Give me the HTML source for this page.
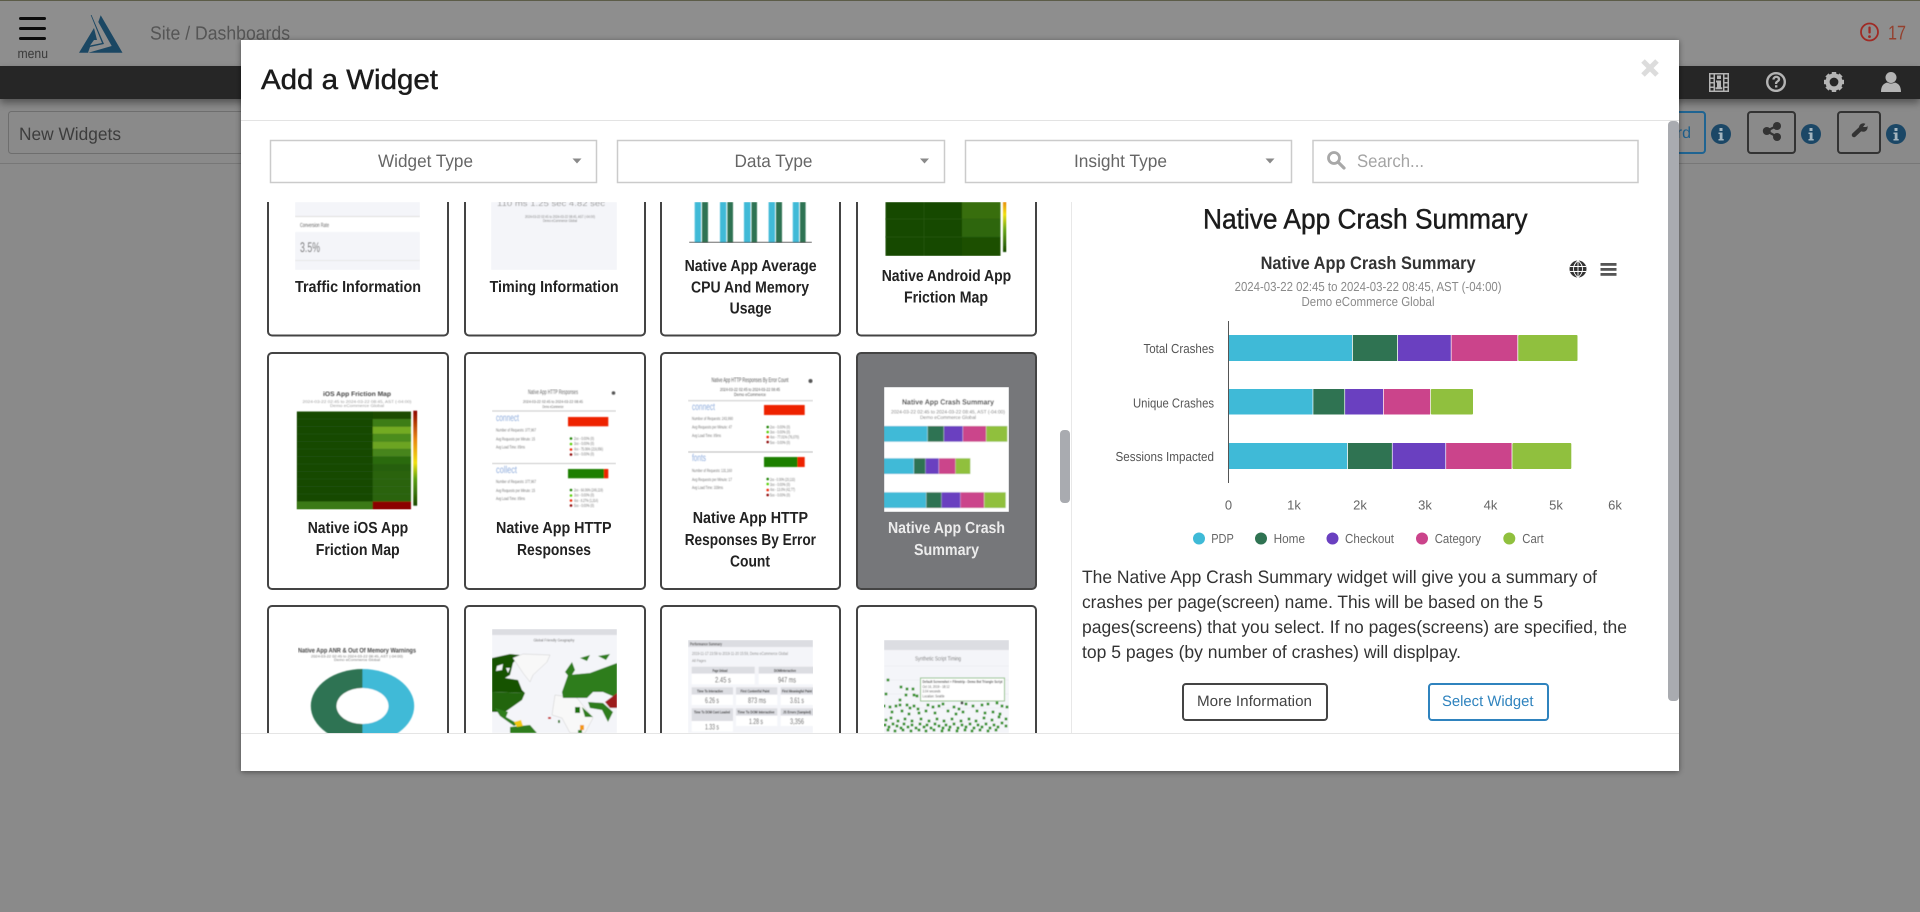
<!DOCTYPE html>
<html lang="en"><head><meta charset="utf-8"><title>Add a Widget</title>
<style>
html,body{margin:0;padding:0;width:1920px;height:912px;overflow:hidden;background:#8a8a8a}
svg{display:block;font-family:"Liberation Sans",sans-serif}
.m{stroke-width:.45}
</style></head><body>
<svg xmlns="http://www.w3.org/2000/svg" width="1920" height="912" viewBox="0 0 1920 912" text-rendering="geometricPrecision">
<defs>
<filter id="sh" x="-5%" y="-5%" width="110%" height="110%"><feDropShadow dx="0" dy="1" stdDeviation="3" flood-color="#000" flood-opacity=".45"/></filter>
<filter id="bs" x="-5%" y="-50%" width="110%" height="250%"><feDropShadow dx="0" dy="4" stdDeviation="4" flood-color="#000" flood-opacity=".4"/></filter>
<filter id="b" x="0" y="0" width="100%" height="100%"><feGaussianBlur stdDeviation=".4"/></filter>
<clipPath id="list"><rect x="250" y="202" width="821" height="531"/></clipPath>
<clipPath id="c1"><rect x="492" y="629" width="125" height="104"/></clipPath>
<clipPath id="c2"><rect x="688" y="640" width="125" height="93"/></clipPath>
<clipPath id="c3"><rect x="884" y="640" width="125" height="93"/></clipPath>
<clipPath id="c4"><rect x="295" y="640" width="135" height="93"/></clipPath>
</defs>

<!-- Page header -->
<rect width="1920" height="66" fill="#8e8e8e"/>
<rect width="1920" height="1" fill="#5c5c48"/>
<g fill="#0d0d0d"><rect x="19" y="17" width="27" height="3" rx="1.5"/><rect x="19" y="27" width="27" height="3" rx="1.5"/><rect x="19" y="37" width="27" height="3" rx="1.5"/></g>
<text x="17.5" y="58" font-size="13.5" fill="#3a3a3a" textLength="30.5" lengthAdjust="spacingAndGlyphs">menu</text>
<g fill="#1b4763">
<polygon points="100.7,15.3 122.5,52.7 88.3,52.7 111.7,46 98.3,22"/>
<polygon points="90.7,15 102,43 90,45.5 94,40 97,40 94,28 79,52.7 88,52.7 90,47 104,44 91.5,15"/>
</g>
<text x="150" y="39.5" font-size="19" fill="#555" textLength="140" lengthAdjust="spacingAndGlyphs">Site / Dashboards</text>
<circle cx="1869.5" cy="32" r="8.5" fill="none" stroke="#a02a24" stroke-width="1.8"/>
<rect x="1868.4" y="26.5" width="2.3" height="7" rx="1" fill="#a02a24"/><circle cx="1869.5" cy="36.6" r="1.4" fill="#a02a24"/>
<text x="1888" y="39.7" font-size="20" fill="#94402e" textLength="18" lengthAdjust="spacingAndGlyphs">17</text>

<rect y="66" width="1920" height="33" fill="#272727" filter="url(#bs)"/>
<!-- Dark bar icons -->
<g fill="#b4b4b4">
<path fill-rule="evenodd" d="M1709 73h20v19h-20zM1710.500 74.500v3h3v-3zM1710.500 79v3h3v-3zM1710.500 83.500v3h3v-3zM1710.500 88v2.500h3V88zM1724.500 74.500v3h3v-3zM1724.500 79v3h3v-3zM1724.500 83.500v3h3v-3zM1724.500 88v2.500h3V88zM1715 74.500v16h8v-16z"/>
<rect x="1717" y="75.500" width="4" height="3.500"/><path d="M1716 80.500h5v6.800h1.300v2h-6.800v-2h1.500v-4.800H1716z"/>
<circle cx="1776" cy="82" r="8.800" fill="none" stroke="#b4b4b4" stroke-width="2.400"/>
<path d="M1772.300 79.500c.3-2.400 2-3.700 4-3.700 2.300 0 3.900 1.400 3.900 3.300 0 1.600-.9 2.400-2 3.100-.8.500-1 .9-1 1.800h-2.300c0-1.700.4-2.500 1.700-3.300.8-.5 1.200-.9 1.200-1.500 0-.8-.6-1.300-1.500-1.300s-1.500.6-1.700 1.700zM1775 85.200h2.400v2.300H1775z"/>
<g transform="translate(1834,82)"><circle r="6.500" fill="none" stroke="#b4b4b4" stroke-width="4.200"/><rect x="-2.200" y="-10" width="4.400" height="4"/><rect x="-2.200" y="-10" width="4.400" height="4" transform="rotate(45)"/><rect x="-2.200" y="-10" width="4.400" height="4" transform="rotate(90)"/><rect x="-2.200" y="-10" width="4.400" height="4" transform="rotate(135)"/><rect x="-2.200" y="-10" width="4.400" height="4" transform="rotate(180)"/><rect x="-2.200" y="-10" width="4.400" height="4" transform="rotate(225)"/><rect x="-2.200" y="-10" width="4.400" height="4" transform="rotate(270)"/><rect x="-2.200" y="-10" width="4.400" height="4" transform="rotate(315)"/></g>
<circle cx="1891" cy="77.500" r="5.500"/><path d="M1881 92c0-6 2.500-8.500 6-9.500 2.500 1.300 5.500 1.300 8 0 3.500 1 6 3.500 6 9.500z"/>
</g>

<!-- Toolbar -->
<rect x="8.500" y="111.500" width="400" height="42" rx="3" fill="none" stroke="#6e6e6e"/>
<text x="19" y="140" font-size="18" fill="#3d3d3d" textLength="102" lengthAdjust="spacingAndGlyphs">New Widgets</text>
<rect y="163" width="1920" height="1" fill="#777"/>
<rect x="1600" y="112" width="105" height="41" rx="3" fill="none" stroke="#1f6492" stroke-width="2"/>
<text x="1691" y="138" font-size="16" fill="#1f5f8b" text-anchor="end">Add Dashboard</text>
<rect x="1748" y="112" width="47" height="41" rx="3" fill="none" stroke="#333" stroke-width="2"/>
<rect x="1838" y="112" width="42" height="41" rx="3" fill="none" stroke="#333" stroke-width="2"/>
<g fill="#333"><circle cx="1777" cy="126" r="4"/><circle cx="1766.800" cy="131" r="4"/><circle cx="1777" cy="137" r="4"/><path d="M1766 130l11-5.500 1 2-11 5.500zM1767 130l11 6-1 2-11-6z"/></g>
<g><path d="M1854 135l8-7.500" stroke="#333" stroke-width="4.500" stroke-linecap="round"/><circle cx="1863.300" cy="127.500" r="4.300" fill="#333"/><path d="M1863 127l3-4h3l-2.500 4z" fill="#8a8a8a"/></g>
<g fill="#1b4766"><circle cx="1721" cy="134" r="10"/><circle cx="1811" cy="134" r="10"/><circle cx="1896" cy="134" r="10"/></g>
<g fill="#a5b5bf"><path d="M1719.500 128h3v3h-3zM1718.500 132.500h4v6.500h1.200v1.500h-5.200V139h1.200v-5h-1.200z"/><path d="M1809.500 128h3v3h-3zM1808.500 132.500h4v6.500h1.200v1.500h-5.200V139h1.200v-5h-1.200z"/><path d="M1894.500 128h3v3h-3zM1893.500 132.500h4v6.500h1.200v1.500h-5.200V139h1.200v-5h-1.200z"/></g>

<!-- Modal -->
<rect x="241" y="40" width="1438" height="731" fill="#fff" filter="url(#sh)"/>
<text x="261" y="89" font-size="28" fill="#1b1b1b" stroke="#1b1b1b" class="m" textLength="177" lengthAdjust="spacingAndGlyphs">Add a Widget</text>
<path d="M1643 61l14 14M1657 61l-14 14" stroke="#dcdcdc" stroke-width="5"/>
<rect x="241" y="120" width="1438" height="1" fill="#e3e3e3"/>

<!-- Filters -->
<g fill="#fff" stroke="#cbcbcb" stroke-width="1.500">
<rect x="270.500" y="140.500" width="326" height="42"/><rect x="617.500" y="140.500" width="327" height="42"/><rect x="965.500" y="140.500" width="326" height="42"/><rect x="1313" y="140.500" width="325" height="42"/>
</g>
<g font-size="18" fill="#666">
<text x="378" y="167" textLength="95" lengthAdjust="spacingAndGlyphs">Widget Type</text>
<text x="734.500" y="167" textLength="78" lengthAdjust="spacingAndGlyphs">Data Type</text>
<text x="1074" y="167" textLength="93" lengthAdjust="spacingAndGlyphs">Insight Type</text>
<text x="1357" y="167" fill="#a4a4a4" textLength="67" lengthAdjust="spacingAndGlyphs">Search...</text>
</g>
<g fill="#8a8a8a"><polygon points="572.500,158.500 581.500,158.500 577,163.500"/><polygon points="920,158.500 929,158.500 924.500,163.500"/><polygon points="1265.500,158.500 1274.500,158.500 1270,163.500"/></g>
<circle cx="1334" cy="158" r="5.500" fill="none" stroke="#a8a8a8" stroke-width="2.800"/><path d="M1338 162l6 6" stroke="#a8a8a8" stroke-width="3.200" stroke-linecap="round"/>

<!-- Widget list -->
<g clip-path="url(#list)">
<g fill="#fff" stroke="#444" stroke-width="2">
<rect x="268" y="100" width="180" height="235.500" rx="4"/><rect x="465" y="100" width="180" height="235.500" rx="4"/><rect x="661" y="100" width="179" height="235.500" rx="4"/><rect x="857" y="100" width="179" height="235.500" rx="4"/>
<rect x="268" y="353" width="180" height="236" rx="4"/><rect x="465" y="353" width="180" height="236" rx="4"/><rect x="661" y="353" width="179" height="236" rx="4"/><rect x="857" y="353" width="179" height="236" rx="4" fill="#76777a"/>
<rect x="268" y="606" width="180" height="236" rx="4"/><rect x="465" y="606" width="180" height="236" rx="4"/><rect x="661" y="606" width="179" height="236" rx="4"/><rect x="857" y="606" width="179" height="236" rx="4"/>
</g>

<!-- Traffic -->
<g filter="url(#b)">
<rect x="295" y="202" width="125" height="68" fill="#f4f5f9"/>
<rect x="295" y="216" width="125" height="1" fill="#ddd"/><rect x="295" y="217" width="125" height="15" fill="#fff"/><rect x="295" y="260" width="125" height="1" fill="#e6e6e6"/>
<text x="300" y="227" font-size="6" fill="#444" textLength="29" lengthAdjust="spacingAndGlyphs">Conversion Rate</text>
<text x="300" y="252" font-size="14" fill="#666" textLength="20" lengthAdjust="spacingAndGlyphs">3.5%</text>
</g>
<!-- Timing -->
<g filter="url(#b)">
<rect x="491" y="202" width="126" height="68" fill="#f4f5f9"/>
<text x="497" y="206" font-size="8" fill="#999" textLength="108" lengthAdjust="spacingAndGlyphs">110 ms   1.25 sec   4.82 sec</text>
<text x="525" y="218" font-size="4" fill="#777" textLength="70" lengthAdjust="spacingAndGlyphs">2024-03-22 02:45 to 2024-03-22 08:45, AST (-04:00)</text>
<text x="543" y="222" font-size="4" fill="#777" textLength="34" lengthAdjust="spacingAndGlyphs">Demo eCommerce Global</text>
</g>
<!-- CPU -->
<g filter="url(#b)">
<g fill="#3fbad7"><rect x="694.700" y="202" width="6.300" height="40"/><rect x="720" y="202" width="6.300" height="40"/><rect x="744" y="202" width="6.500" height="40"/><rect x="768.600" y="202" width="6.400" height="40"/><rect x="792.800" y="202" width="6.200" height="40"/></g>
<g fill="#2f7352"><rect x="702" y="202" width="6" height="40"/><rect x="727.400" y="202" width="5.600" height="40"/><rect x="751.500" y="202" width="5.500" height="40"/><rect x="776" y="202" width="6" height="40"/><rect x="800" y="202" width="5.600" height="40"/></g>
<rect x="689" y="242" width="123" height="1" fill="#444"/>
</g>
<!-- Android -->
<g filter="url(#b)">
<rect x="885.500" y="202" width="115" height="54" fill="#174a00"/>
<rect x="962" y="202" width="38.500" height="17" fill="#376e0c"/><rect x="962" y="219" width="38.500" height="18" fill="#2e660a"/><rect x="962" y="237" width="38.500" height="19" fill="#1c4f00"/>
<path d="M924 202v54M885 219h115M885 237h115" stroke="#2b5a12" stroke-width=".6"/>
<linearGradient id="g1" x1="0" y1="0" x2="0" y2="1"><stop offset="0" stop-color="#e89010"/><stop offset=".25" stop-color="#f0e010"/><stop offset=".55" stop-color="#6aa818"/><stop offset="1" stop-color="#174a00"/></linearGradient>
<rect x="1003" y="202" width="3.500" height="50" fill="url(#g1)"/>
</g>

<!-- iOS friction -->
<g filter="url(#b)">
<text x="357" y="396" font-size="6.500" font-weight="700" fill="#444" text-anchor="middle" textLength="68" lengthAdjust="spacingAndGlyphs">iOS App Friction Map</text>
<text x="357" y="403" font-size="4" fill="#999" text-anchor="middle" textLength="109" lengthAdjust="spacingAndGlyphs">2024-03-22 02:45 to 2024-03-22 08:45, AST (-04:00)</text>
<text x="357" y="407" font-size="4" fill="#999" text-anchor="middle" textLength="54" lengthAdjust="spacingAndGlyphs">Demo eCommerce Global</text>
<rect x="296.700" y="411.500" width="114.300" height="98" fill="#174800"/>
<g>
<rect x="372.700" y="411.500" width="38.300" height="7.500" fill="#1a4b00"/><rect x="372.700" y="419" width="38.300" height="7.500" fill="#3d7d17"/><rect x="372.700" y="426.500" width="38.300" height="7.500" fill="#73ab22"/><rect x="372.700" y="434" width="38.300" height="7.500" fill="#4c8c1c"/><rect x="372.700" y="441.500" width="38.300" height="7.500" fill="#6ca420"/><rect x="372.700" y="449" width="38.300" height="7.500" fill="#46851a"/><rect x="372.700" y="456.500" width="38.300" height="7.500" fill="#2c6a10"/><rect x="372.700" y="464" width="38.300" height="7.500" fill="#265f0c"/><rect x="372.700" y="471.500" width="38.300" height="30" fill="#2a640f"/>
<rect x="296.700" y="501.500" width="76" height="8" fill="#3a7a14"/><rect x="372.700" y="501.500" width="38.300" height="8" fill="#8c0000"/>
</g>
<path d="M296.700 419h114M296.700 426.500h114M296.700 434h114M296.700 441.500h114M296.700 449h114M296.700 456.500h114M296.700 464h114M296.700 471.500h114M296.700 479h114M296.700 486.500h114M296.700 494h114" stroke="#3a6a20" stroke-width=".25"/>
<linearGradient id="g2" x1="0" y1="0" x2="0" y2="1"><stop offset="0" stop-color="#8b0000"/><stop offset=".3" stop-color="#e8850c"/><stop offset=".55" stop-color="#f0e010"/><stop offset=".72" stop-color="#5aa010"/><stop offset="1" stop-color="#174800"/></linearGradient>
<rect x="413.300" y="410.700" width="4" height="95" fill="url(#g2)"/>
</g>

<!-- HTTP responses -->
<g filter="url(#b)">
<text x="553" y="394" font-size="6.500" fill="#666" text-anchor="middle" textLength="50" lengthAdjust="spacingAndGlyphs">Native App HTTP Responses</text>
<circle cx="613.500" cy="393" r="1.800" fill="#555"/>
<text x="553" y="403" font-size="4" fill="#666" text-anchor="middle" textLength="60" lengthAdjust="spacingAndGlyphs">2024-03-22 02:45 to 2024-03-22 08:45</text>
<text x="553" y="408" font-size="4" fill="#666" text-anchor="middle" textLength="21" lengthAdjust="spacingAndGlyphs">Demo eCommerce</text>
<rect x="492" y="410.500" width="124" height="1" fill="#c8c8c8"/>
<text x="496" y="421" font-size="10" fill="#8caadb" textLength="23" lengthAdjust="spacingAndGlyphs">connect</text>
<rect x="568" y="417" width="40.300" height="9.300" fill="#ee2200"/>
<g font-size="4.500" fill="#777"><text x="496" y="431.500" textLength="40" lengthAdjust="spacingAndGlyphs">Number of Requests: 377,967</text><text x="496" y="440.500" textLength="39" lengthAdjust="spacingAndGlyphs">Avg Requests per Minute: 15</text><text x="496" y="448.500" textLength="29" lengthAdjust="spacingAndGlyphs">Avg Load Time: 85ms</text>
<text x="574" y="440" textLength="20" lengthAdjust="spacingAndGlyphs">2xx - 0.00% (0)</text><text x="574" y="445" textLength="20" lengthAdjust="spacingAndGlyphs">3xx - 0.00% (0)</text><text x="574" y="450.500" textLength="29" lengthAdjust="spacingAndGlyphs">4xx - 75.06% (219,056)</text><text x="574" y="455.500" textLength="20" lengthAdjust="spacingAndGlyphs">5xx - 0.00% (0)</text></g>
<g><circle cx="571" cy="438.500" r="1.300" fill="#1a8000"/><circle cx="571" cy="444" r="1.300" fill="#55cc00"/><circle cx="571" cy="449.500" r="1.300" fill="#ee2200"/><circle cx="571" cy="454.500" r="1.300" fill="#8b0000"/></g>
<rect x="492" y="463" width="124" height="1" fill="#c8c8c8"/>
<text x="496" y="473" font-size="10" fill="#8caadb" textLength="21" lengthAdjust="spacingAndGlyphs">collect</text>
<rect x="568" y="469" width="36" height="9.300" fill="#1f7f00"/><rect x="604" y="469" width="4.300" height="9.300" fill="#ee2200"/>
<g font-size="4.500" fill="#777"><text x="496" y="483" textLength="40" lengthAdjust="spacingAndGlyphs">Number of Requests: 377,967</text><text x="496" y="492" textLength="39" lengthAdjust="spacingAndGlyphs">Avg Requests per Minute: 15</text><text x="496" y="500" textLength="29" lengthAdjust="spacingAndGlyphs">Avg Load Time: 85ms</text>
<text x="574" y="491.500" textLength="29" lengthAdjust="spacingAndGlyphs">2xx - 64.06% (246,119)</text><text x="574" y="496.500" textLength="20" lengthAdjust="spacingAndGlyphs">3xx - 0.00% (0)</text><text x="574" y="502" textLength="24" lengthAdjust="spacingAndGlyphs">4xx - 8.27% (1,314)</text><text x="574" y="507" textLength="20" lengthAdjust="spacingAndGlyphs">5xx - 0.00% (0)</text></g>
<g><circle cx="571" cy="490" r="1.300" fill="#1a8000"/><circle cx="571" cy="495.500" r="1.300" fill="#55cc00"/><circle cx="571" cy="500.500" r="1.300" fill="#ee2200"/><circle cx="571" cy="505.500" r="1.300" fill="#8b0000"/></g>
</g>

<!-- HTTP by error count -->
<g filter="url(#b)">
<text x="750" y="382" font-size="6.500" fill="#555" text-anchor="middle" textLength="77" lengthAdjust="spacingAndGlyphs">Native App HTTP Responses By Error Count</text>
<circle cx="810.500" cy="381" r="2" fill="#555"/>
<text x="750" y="391" font-size="4.500" fill="#555" text-anchor="middle" textLength="60" lengthAdjust="spacingAndGlyphs">2024-03-22 02:45 to 2024-03-22 08:45</text>
<text x="750" y="396" font-size="4.500" fill="#555" text-anchor="middle" textLength="32" lengthAdjust="spacingAndGlyphs">Demo eCommerce</text>
<rect x="688" y="400.200" width="125" height="1" fill="#c8c8c8"/>
<text x="692" y="410" font-size="10" fill="#8caadb" textLength="23" lengthAdjust="spacingAndGlyphs">connect</text>
<rect x="764" y="405" width="40.700" height="10" fill="#ee2200"/>
<g font-size="4.500" fill="#777"><text x="692" y="420" textLength="41" lengthAdjust="spacingAndGlyphs">Number of Requests: 243,990</text><text x="692" y="428.500" textLength="40" lengthAdjust="spacingAndGlyphs">Avg Requests per Minute: 47</text><text x="692" y="437" textLength="29" lengthAdjust="spacingAndGlyphs">Avg Load Time: 85ms</text>
<text x="770" y="428.500" textLength="20" lengthAdjust="spacingAndGlyphs">2xx - 0.00% (0)</text><text x="770" y="433.500" textLength="20" lengthAdjust="spacingAndGlyphs">3xx - 0.00% (0)</text><text x="770" y="438.500" textLength="29" lengthAdjust="spacingAndGlyphs">4xx - 77.01% (76,070)</text><text x="770" y="444" textLength="20" lengthAdjust="spacingAndGlyphs">5xx - 0.00% (0)</text></g>
<g><circle cx="767.700" cy="427" r="1.300" fill="#1a8000"/><circle cx="767.700" cy="432" r="1.300" fill="#55cc00"/><circle cx="767.700" cy="437" r="1.300" fill="#ee2200"/><circle cx="767.700" cy="442" r="1.300" fill="#8b0000"/></g>
<rect x="688" y="451.500" width="125" height="1" fill="#b8b8b8"/>
<text x="692" y="461" font-size="10" fill="#8caadb" textLength="14" lengthAdjust="spacingAndGlyphs">fonts</text>
<rect x="764" y="457" width="33.500" height="10" fill="#1f7f00"/><rect x="797.500" y="457" width="7.200" height="10" fill="#ee2200"/>
<g font-size="4.500" fill="#777"><text x="692" y="472" textLength="40" lengthAdjust="spacingAndGlyphs">Number of Requests: 131,160</text><text x="692" y="481" textLength="40" lengthAdjust="spacingAndGlyphs">Avg Requests per Minute: 17</text><text x="692" y="489" textLength="31" lengthAdjust="spacingAndGlyphs">Avg Load Time: 339ms</text>
<text x="770" y="481" textLength="25" lengthAdjust="spacingAndGlyphs">2xx - 0.00% (20,133)</text><text x="770" y="486" textLength="20" lengthAdjust="spacingAndGlyphs">3xx - 0.00% (0)</text><text x="770" y="491" textLength="25" lengthAdjust="spacingAndGlyphs">4xx - 13.0% (42,77)</text><text x="770" y="496.500" textLength="20" lengthAdjust="spacingAndGlyphs">5xx - 0.00% (0)</text></g>
<g><circle cx="767.700" cy="479" r="1.300" fill="#1a8000"/><circle cx="767.700" cy="484" r="1.300" fill="#55cc00"/><circle cx="767.700" cy="490" r="1.300" fill="#ee2200"/><circle cx="767.700" cy="495" r="1.300" fill="#8b0000"/></g>
</g>

<!-- Crash thumb -->
<g filter="url(#b)">
<rect x="884" y="387" width="125" height="125" fill="#fff"/>
<text x="948" y="404.500" font-size="7.500" font-weight="700" fill="#333" text-anchor="middle" textLength="92" lengthAdjust="spacingAndGlyphs">Native App Crash Summary</text>
<text x="948" y="413.500" font-size="5" fill="#777" text-anchor="middle" textLength="114" lengthAdjust="spacingAndGlyphs">2024-03-22 02:45 to 2024-03-22 08:45, AST (-04:00)</text>
<text x="948" y="419" font-size="5" fill="#777" text-anchor="middle" textLength="56" lengthAdjust="spacingAndGlyphs">Demo eCommerce Global</text>
<g><rect x="884" y="426" width="43.300" height="15.700" fill="#3fbad7"/><rect x="927.700" y="426" width="16" height="15.700" fill="#2f7352"/><rect x="944" y="426" width="18.700" height="15.700" fill="#6a40c0"/><rect x="963" y="426" width="23" height="15.700" fill="#cb448b"/><rect x="986.300" y="426" width="21" height="15.700" fill="#90c03e"/>
<rect x="884" y="458.300" width="29.700" height="15.700" fill="#3fbad7"/><rect x="914" y="458.300" width="11.300" height="15.700" fill="#2f7352"/><rect x="925.600" y="458.300" width="13.100" height="15.700" fill="#6a40c0"/><rect x="939" y="458.300" width="16.300" height="15.700" fill="#cb448b"/><rect x="955.600" y="458.300" width="14.700" height="15.700" fill="#90c03e"/>
<rect x="884" y="492.300" width="42" height="15.700" fill="#3fbad7"/><rect x="926.300" y="492.300" width="15" height="15.700" fill="#2f7352"/><rect x="941.600" y="492.300" width="18.700" height="15.700" fill="#6a40c0"/><rect x="960.600" y="492.300" width="23.400" height="15.700" fill="#cb448b"/><rect x="984.300" y="492.300" width="21.400" height="15.700" fill="#90c03e"/></g>
</g>

<!-- ANR donut -->
<g clip-path="url(#c4)"><g filter="url(#b)">
<text x="357" y="652.500" font-size="6.800" font-weight="700" fill="#444" text-anchor="middle" textLength="118" lengthAdjust="spacingAndGlyphs">Native App ANR &amp; Out Of Memory Warnings</text>
<text x="357" y="657.500" font-size="3.500" fill="#777" text-anchor="middle" textLength="92" lengthAdjust="spacingAndGlyphs">2024-03-22 02:45 to 2024-03-22 08:45, AST (-04:00)</text>
<text x="357" y="661" font-size="3.500" fill="#777" text-anchor="middle" textLength="46" lengthAdjust="spacingAndGlyphs">Demo eCommerce Global</text>
<path d="M362.500 669A51.700 37 0 0 0 362.500 743z" fill="#2f7352"/><path d="M362.500 669A51.700 37 0 0 1 362.500 743z" fill="#3fbad7"/>
<ellipse cx="362.500" cy="706" rx="26" ry="18" fill="#fff"/>
</g></g>

<!-- Map -->
<g clip-path="url(#c1)"><g filter="url(#b)">
<rect x="492" y="629" width="125" height="104" fill="#f4f5f9"/><rect x="492" y="629" width="125" height="6" fill="#dcdde2"/>
<text x="554" y="641.500" font-size="4" fill="#666" text-anchor="middle" textLength="41" lengthAdjust="spacingAndGlyphs">Global Friendly Geography</text>
<polygon points="555,695 577,698 593,718 585,733 570,733 562,718 552,715" fill="#f8f8f8" stroke="#ccc" stroke-width=".5"/>
<polygon points="492,658 510,654 520,655 513,663 510,675 505,678 518,680 522,690 525,693 492,692" fill="#185200"/>
<polygon points="497,666 503,664 502,670 496,671" fill="#f4f5f9"/><polygon points="506,668 510,668 508,673" fill="#f4f5f9"/>
<polygon points="492,692 525,693 522,700 505,712 492,712" fill="#20650c"/>
<polygon points="495,708 508,712 506,717 518,724 514,726 500,716" fill="#2e7d1e"/>
<polygon points="510,727 530,725 537,733 510,733" fill="#2e7d1e"/>
<polygon points="514,722 521,720 523,726 517,727" fill="#f2c811"/>
<polygon points="513,658 523,654 550,655 547,662 533,675 530,682 523,673" fill="#f8f8f8" stroke="#ccc" stroke-width=".5"/>
<polygon points="562,692 568,675 590,673 617,663 617,698 603,692 593,692 587,698 563,698" fill="#2e7d1e"/>
<polygon points="565,672 572,662 575,670 570,678" fill="#2e7d1e"/><polygon points="580,658 590,655 587,661" fill="#2e7d1e"/><polygon points="598,656 610,654 606,660" fill="#2e7d1e"/>
<polygon points="588,702 603,703 613,712 608,722 602,710 590,708" fill="#2e7d1e"/>
<rect x="575" y="707" width="5" height="6" fill="#1f6f10"/><polygon points="582,707 593,717 585,717" fill="#2e7d1e"/>
<polygon points="617,693 605,702 610,708 617,708" fill="#9c1c1c"/>
<rect x="580" y="725" width="4" height="5" fill="#f29a13"/><rect x="578" y="730" width="4" height="3" fill="#2e7d1e"/><rect x="548" y="717" width="3" height="2" fill="#c81e1e"/><rect x="558" y="720" width="2" height="3" fill="#2e7d1e"/>
</g></g>

<!-- Perf summary -->
<g clip-path="url(#c2)"><g filter="url(#b)">
<rect x="688" y="640" width="125" height="93" fill="#f4f5f9"/><rect x="688" y="640" width="125" height="7" fill="#dcdde2"/>
<text x="690" y="645.500" font-size="4.500" font-weight="700" fill="#555" textLength="32" lengthAdjust="spacingAndGlyphs">Performance Summary</text>
<text x="692" y="655" font-size="4.500" fill="#888" textLength="96" lengthAdjust="spacingAndGlyphs">2019-11-17 23:59 to 2019-11-20 15:59, Demo eCommerce Global</text>
<text x="692" y="662" font-size="4" fill="#888" textLength="14" lengthAdjust="spacingAndGlyphs">All Pages</text>
<g fill="#dcdde2"><rect x="691.700" y="666.700" width="63" height="7"/><rect x="758.700" y="666.700" width="55" height="7"/><rect x="691.700" y="687.300" width="41.300" height="7.400"/><rect x="736" y="687.300" width="41.300" height="7.400"/><rect x="780.700" y="687.300" width="33" height="7.400"/><rect x="691.700" y="708.300" width="41.300" height="12.700"/><rect x="736" y="708.300" width="41.300" height="7.400"/><rect x="780.700" y="708.300" width="33" height="7.400"/></g>
<g fill="#fff"><rect x="691.700" y="673.700" width="63" height="10.600"/><rect x="758.700" y="673.700" width="55" height="10.600"/><rect x="691.700" y="694.700" width="41.300" height="10.300"/><rect x="736" y="694.700" width="41.300" height="10.300"/><rect x="780.700" y="694.700" width="33" height="10.300"/><rect x="691.700" y="721" width="41.300" height="10.700"/><rect x="736" y="715.700" width="41.300" height="10.300"/><rect x="780.700" y="715.700" width="33" height="10.300"/></g>
<g font-size="4" font-weight="700" fill="#333" text-anchor="middle">
<text x="720" y="672" textLength="15" lengthAdjust="spacingAndGlyphs">Page Unload</text><text x="785" y="672" textLength="22" lengthAdjust="spacingAndGlyphs">DOMInteractive</text>
<text x="710" y="692.500" textLength="26" lengthAdjust="spacingAndGlyphs">Time To Interactive</text><text x="755" y="692.500" textLength="29" lengthAdjust="spacingAndGlyphs">First Contentful Paint</text><text x="797" y="692.500" textLength="30" lengthAdjust="spacingAndGlyphs">First Meaningful Paint</text>
<text x="712" y="713.500" textLength="36" lengthAdjust="spacingAndGlyphs">Time To DOM Cont Loaded</text><text x="756" y="713.500" textLength="37" lengthAdjust="spacingAndGlyphs">Time To DOM Interactive</text><text x="797" y="713.500" textLength="28" lengthAdjust="spacingAndGlyphs">JS Errors (Sampled)</text></g>
<g font-size="8" fill="#555" text-anchor="middle"><text x="723" y="682.500" textLength="16" lengthAdjust="spacingAndGlyphs">2.45 s</text><text x="787" y="682.500" textLength="18" lengthAdjust="spacingAndGlyphs">947 ms</text><text x="712" y="703" textLength="14" lengthAdjust="spacingAndGlyphs">6.26 s</text><text x="757" y="703" textLength="18" lengthAdjust="spacingAndGlyphs">873 ms</text><text x="797" y="703" textLength="14" lengthAdjust="spacingAndGlyphs">3.61 s</text><text x="712" y="729.500" textLength="14" lengthAdjust="spacingAndGlyphs">1.33 s</text><text x="756" y="724" textLength="14" lengthAdjust="spacingAndGlyphs">1.28 s</text><text x="797" y="724" textLength="14" lengthAdjust="spacingAndGlyphs">3,356</text></g>
</g></g>

<!-- Synthetic -->
<g clip-path="url(#c3)"><g filter="url(#b)">
<rect x="884" y="640" width="125" height="93" fill="#f4f5f9"/><rect x="884" y="640" width="125" height="10" fill="#dcdde2"/>
<text x="938" y="660.500" font-size="6" fill="#777" text-anchor="middle" textLength="46" lengthAdjust="spacingAndGlyphs">Synthetic Script Timing</text>
<path d="M884 666h125M884 680h125M884 694h125M884 708h125M884 722h125" stroke="#e8e9ee" stroke-width=".6"/>
<path fill="#2a8f1c" stroke="#2a8f1c" stroke-width=".7" d="M887 679h2v2h-2zM900 686h2v2h-2zM906 688h2v2h-2zM912 688h2v2h-2zM885 693h2v2h-2zM905 694h2v2h-2zM913 694h2v2h-2zM916 695h2v2h-2zM899 699h2v2h-2zM883 705h2v2h-2zM889 706h2v2h-2zM895 705h2v2h-2zM899 704h2v2h-2zM906 704h2v2h-2zM909 707h2v2h-2zM913 705h2v2h-2zM917 708h2v2h-2zM927 704h2v2h-2zM932 706h2v2h-2zM938 705h2v2h-2zM942 703h2v2h-2zM953 706h2v2h-2zM958 708h2v2h-2zM965 703h2v2h-2zM972 705h2v2h-2zM981 704h2v2h-2zM987 703h2v2h-2zM996 702h2v2h-2zM1001 705h2v2h-2zM1006 706h2v2h-2zM891 711h2v2h-2zM901 710h2v2h-2zM908 713h2v2h-2zM918 712h2v2h-2zM925 710h2v2h-2zM934 712h2v2h-2zM947 710h2v2h-2zM955 713h2v2h-2zM962 711h2v2h-2zM976 710h2v2h-2zM984 712h2v2h-2zM992 711h2v2h-2zM999 713h2v2h-2zM885 719h2v2h-2zM890 717h2v2h-2zM897 720h2v2h-2zM904 718h2v2h-2zM911 720h2v2h-2zM920 718h2v2h-2zM928 720h2v2h-2zM936 718h2v2h-2zM943 720h2v2h-2zM951 718h2v2h-2zM960 720h2v2h-2zM968 718h2v2h-2zM975 720h2v2h-2zM983 717h2v2h-2zM991 719h2v2h-2zM998 716h2v2h-2zM1005 718h2v2h-2zM884 724h2v2h-2zM888 726h2v2h-2zM892 723h2v2h-2zM896 725h2v2h-2zM900 727h2v2h-2zM903 723h2v2h-2zM907 726h2v2h-2zM911 724h2v2h-2zM915 727h2v2h-2zM919 723h2v2h-2zM923 726h2v2h-2zM926 724h2v2h-2zM930 727h2v2h-2zM934 723h2v2h-2zM938 725h2v2h-2zM942 727h2v2h-2zM945 724h2v2h-2zM949 726h2v2h-2zM953 723h2v2h-2zM957 727h2v2h-2zM961 724h2v2h-2zM965 726h2v2h-2zM969 723h2v2h-2zM973 727h2v2h-2zM977 724h2v2h-2zM981 726h2v2h-2zM985 723h2v2h-2zM989 727h2v2h-2zM993 724h2v2h-2zM997 726h2v2h-2zM1001 722h2v2h-2zM1005 725h2v2h-2zM887 729h2v2h-2zM894 730h2v2h-2zM902 729h2v2h-2zM910 730h2v2h-2zM918 729h2v2h-2zM925 730h2v2h-2zM933 729h2v2h-2zM941 730h2v2h-2zM948 729h2v2h-2zM956 730h2v2h-2zM964 729h2v2h-2zM971 730h2v2h-2zM979 729h2v2h-2zM987 730h2v2h-2zM995 729h2v2h-2z"/>
<rect x="920.500" y="678" width="84" height="23" fill="#fff" stroke="#8ac080"/>
<g font-size="4" fill="#555"><text x="922.500" y="683" font-weight="700" textLength="80" lengthAdjust="spacingAndGlyphs">Default Screenshot + Filmstrip - Demo Bot Triangle Script</text><text x="922.500" y="688" textLength="27" lengthAdjust="spacingAndGlyphs">Oct 16, 2019 - 18:12</text><text x="922.500" y="692.500" textLength="18" lengthAdjust="spacingAndGlyphs">3.04 seconds</text><text x="922.500" y="697.500" textLength="22" lengthAdjust="spacingAndGlyphs">Location: Seattle</text></g>
<circle cx="962" cy="703" r="1.500" fill="#444"/>
</g></g>

<!-- Card titles -->
<g font-size="16" font-weight="700" fill="#222" stroke="none">
<text x="295" y="292" textLength="126" lengthAdjust="spacingAndGlyphs">Traffic Information</text>
<text x="489.600" y="292" textLength="129" lengthAdjust="spacingAndGlyphs">Timing Information</text>
<text x="684.600" y="271" textLength="132" lengthAdjust="spacingAndGlyphs">Native App Average</text>
<text x="691" y="292.500" textLength="118" lengthAdjust="spacingAndGlyphs">CPU And Memory</text>
<text x="729.600" y="313.500" textLength="42" lengthAdjust="spacingAndGlyphs">Usage</text>
<text x="881.700" y="281" textLength="129.500" lengthAdjust="spacingAndGlyphs">Native Android App</text>
<text x="904" y="302.500" textLength="84" lengthAdjust="spacingAndGlyphs">Friction Map</text>
<text x="307.700" y="533" textLength="100.500" lengthAdjust="spacingAndGlyphs">Native iOS App</text>
<text x="315.700" y="555" textLength="84" lengthAdjust="spacingAndGlyphs">Friction Map</text>
<text x="496" y="533" textLength="115.500" lengthAdjust="spacingAndGlyphs">Native App HTTP</text>
<text x="517" y="555" textLength="74" lengthAdjust="spacingAndGlyphs">Responses</text>
<text x="692.700" y="523" textLength="115.300" lengthAdjust="spacingAndGlyphs">Native App HTTP</text>
<text x="684.700" y="545" textLength="131.300" lengthAdjust="spacingAndGlyphs">Responses By Error</text>
<text x="730" y="566.500" textLength="40" lengthAdjust="spacingAndGlyphs">Count</text>
<text x="888" y="533" fill="#ececec" textLength="117" lengthAdjust="spacingAndGlyphs">Native App Crash</text>
<text x="914" y="555" fill="#ececec" textLength="65" lengthAdjust="spacingAndGlyphs">Summary</text>
</g>
</g>

<!-- list scrollbar and divider -->
<rect x="1060" y="430" width="10" height="73" rx="4" fill="#a9abb0"/>
<rect x="1071" y="202" width="1" height="531" fill="#e8e8e8"/>

<!-- Detail pane -->
<text x="1203" y="228.700" font-size="28" fill="#1b1b1b" stroke="#1b1b1b" class="m" textLength="324.500" lengthAdjust="spacingAndGlyphs">Native App Crash Summary</text>
<text x="1260.600" y="269" font-size="18" font-weight="700" fill="#333" textLength="215" lengthAdjust="spacingAndGlyphs">Native App Crash Summary</text>
<text x="1234.600" y="291" font-size="13" fill="#8a8a8a" textLength="267" lengthAdjust="spacingAndGlyphs">2024-03-22 02:45 to 2024-03-22 08:45, AST (-04:00)</text>
<text x="1301.500" y="306" font-size="13" fill="#8a8a8a" textLength="133" lengthAdjust="spacingAndGlyphs">Demo eCommerce Global</text>
<g fill="#333"><circle cx="1578" cy="269" r="8.500"/><path d="M1570 266.500h16M1570 271.500h16M1578 260.500v17M1578 260.500c-6 5-6 12 0 17M1578 260.500c6 5 6 12 0 17" stroke="#fff" stroke-width=".9" fill="none"/></g>
<g fill="#555"><rect x="1600.500" y="263" width="16" height="2.800"/><rect x="1600.500" y="268" width="16" height="2.800"/><rect x="1600.500" y="273" width="16" height="2.800"/></g>

<rect x="1228" y="321" width="1" height="162" fill="#555"/>
<g>
<rect x="1229" y="335" width="123" height="26" fill="#3fbad7"/><rect x="1352.800" y="335" width="44.400" height="26" fill="#2f7352"/><rect x="1398" y="335" width="52.800" height="26" fill="#6a40c0"/><rect x="1451.500" y="335" width="65.900" height="26" fill="#cb448b"/><rect x="1518.200" y="335" width="59.300" height="26" rx="1" fill="#90c03e"/>
<rect x="1229" y="389" width="83.600" height="25.500" fill="#3fbad7"/><rect x="1313.300" y="389" width="31.100" height="25.500" fill="#2f7352"/><rect x="1345.100" y="389" width="37.900" height="25.500" fill="#6a40c0"/><rect x="1383.700" y="389" width="46.400" height="25.500" fill="#cb448b"/><rect x="1430.800" y="389" width="42.200" height="25.500" rx="1" fill="#90c03e"/>
<rect x="1229" y="443" width="118.100" height="26" fill="#3fbad7"/><rect x="1347.900" y="443" width="44" height="26" fill="#2f7352"/><rect x="1392.600" y="443" width="52.800" height="26" fill="#6a40c0"/><rect x="1446.100" y="443" width="65.500" height="26" fill="#cb448b"/><rect x="1512.400" y="443" width="58.900" height="26" rx="1" fill="#90c03e"/>
</g>
<g font-size="13" fill="#555">
<text x="1143.500" y="353" textLength="70.500" lengthAdjust="spacingAndGlyphs">Total Crashes</text>
<text x="1133" y="407.500" textLength="81" lengthAdjust="spacingAndGlyphs">Unique Crashes</text>
<text x="1115.500" y="461" textLength="98.500" lengthAdjust="spacingAndGlyphs">Sessions Impacted</text>
</g>
<g font-size="13" fill="#666" text-anchor="middle"><text x="1228.500" y="509.500">0</text><text x="1294" y="509.500">1k</text><text x="1360" y="509.500">2k</text><text x="1425" y="509.500">3k</text><text x="1490.500" y="509.500">4k</text><text x="1556" y="509.500">5k</text><text x="1615" y="509.500">6k</text></g>
<circle cx="1199" cy="538.500" r="6" fill="#3fbad7"/><circle cx="1261" cy="538.500" r="6" fill="#2f7352"/><circle cx="1332.500" cy="538.500" r="6" fill="#6a40c0"/><circle cx="1422" cy="538.500" r="6" fill="#cb448b"/><circle cx="1509.300" cy="538.500" r="6" fill="#90c03e"/>
<g font-size="13" fill="#666"><text x="1211.200" y="543" textLength="22.600" lengthAdjust="spacingAndGlyphs">PDP</text><text x="1273.600" y="543" textLength="31.400" lengthAdjust="spacingAndGlyphs">Home</text><text x="1345" y="543" textLength="49" lengthAdjust="spacingAndGlyphs">Checkout</text><text x="1434.700" y="543" textLength="46.300" lengthAdjust="spacingAndGlyphs">Category</text><text x="1522.300" y="543" textLength="21.400" lengthAdjust="spacingAndGlyphs">Cart</text></g>

<g font-size="18" fill="#333">
<text x="1082" y="583" textLength="515" lengthAdjust="spacingAndGlyphs">The Native App Crash Summary widget will give you a summary of</text>
<text x="1082" y="608" textLength="461" lengthAdjust="spacingAndGlyphs">crashes per page(screen) name. This will be based on the 5</text>
<text x="1082" y="633" textLength="545" lengthAdjust="spacingAndGlyphs">pages(screens) that you select. If no pages(screens) are specified, the</text>
<text x="1082" y="658" textLength="379" lengthAdjust="spacingAndGlyphs">top 5 pages (by number of crashes) will displpay.</text>
</g>
<rect x="1183" y="684" width="144" height="36" rx="3" fill="#fff" stroke="#444" stroke-width="2"/>
<text x="1197" y="706" font-size="15" fill="#444" textLength="115" lengthAdjust="spacingAndGlyphs">More Information</text>
<rect x="1429" y="684" width="119" height="36" rx="3" fill="#fff" stroke="#2f83be" stroke-width="2"/>
<text x="1442" y="706" font-size="15" fill="#2f83be" textLength="91.500" lengthAdjust="spacingAndGlyphs">Select Widget</text>

<rect x="1668" y="121" width="11" height="580" rx="4" fill="#a9abb0"/>
<rect x="241" y="733" width="1438" height="1" fill="#e5e5e5"/>
</svg>
</body></html>
